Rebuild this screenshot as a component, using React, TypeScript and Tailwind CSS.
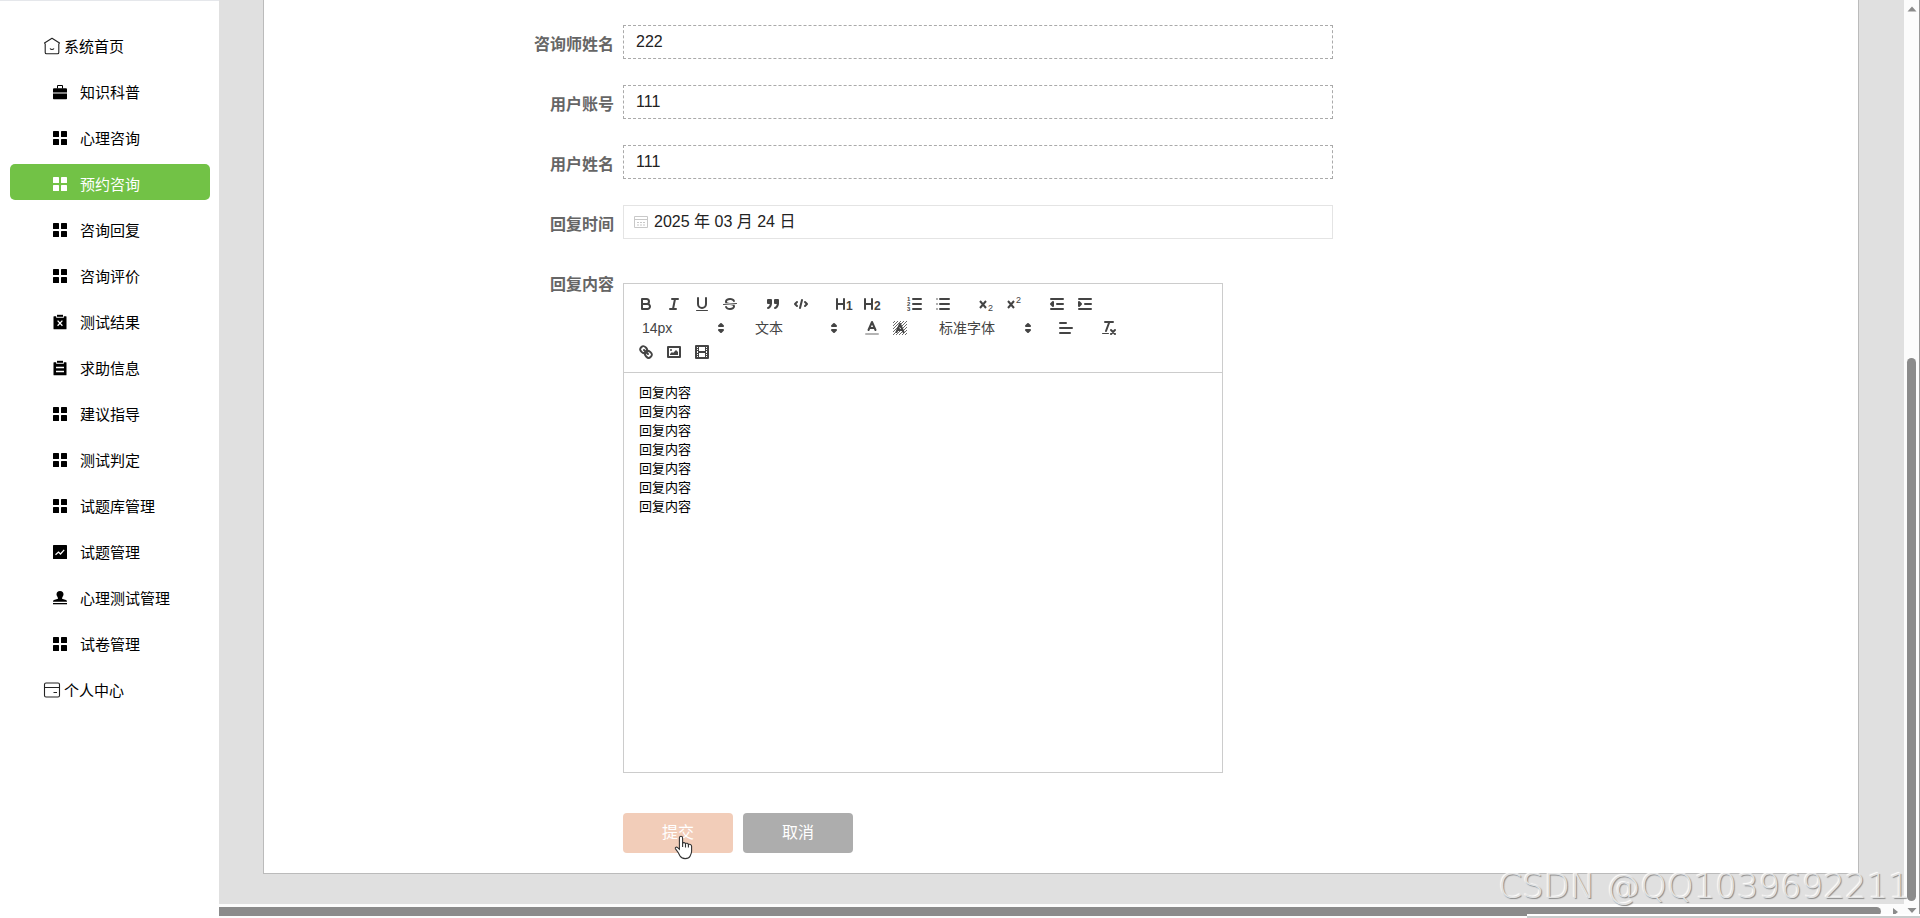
import { useId, useState } from "react";
import type { ReactNode } from "react";

type MenuIconName = "grid" | "case" | "clipX" | "clipLines" | "chart" | "stamp";

interface MenuItem {
  label: string;
  icon: MenuIconName;
}

const menuItems: MenuItem[] = [
  { label: "知识科普", icon: "case" },
  { label: "心理咨询", icon: "grid" },
  { label: "预约咨询", icon: "grid" },
  { label: "咨询回复", icon: "grid" },
  { label: "咨询评价", icon: "grid" },
  { label: "测试结果", icon: "clipX" },
  { label: "求助信息", icon: "clipLines" },
  { label: "建议指导", icon: "grid" },
  { label: "测试判定", icon: "grid" },
  { label: "试题库管理", icon: "grid" },
  { label: "试题管理", icon: "chart" },
  { label: "心理测试管理", icon: "stamp" },
  { label: "试卷管理", icon: "grid" },
];

const menuShapes: Record<MenuIconName, ReactNode> = {
  grid: (
    <>
      <rect x="1" y="1" width="6" height="6" rx="0.6" />
      <rect x="9" y="1" width="6" height="6" rx="0.6" />
      <rect x="1" y="9" width="6" height="6" rx="0.6" />
      <rect x="9" y="9" width="6" height="6" rx="0.6" />
    </>
  ),
  case: (
    <>
      <path d="M5.5 4.500V1.500h5v3" fill="none" stroke="currentColor" />
      <path d="M2 4.300h12a1 1 0 0 1 1 1v3.200H1V5.300a1 1 0 0 1 1-1Z" />
      <path d="M1 9.600h14v4.900a.7.7 0 0 1-.7.7H1.700a.7.7 0 0 1-.7-.7Z" />
    </>
  ),
  clipX: (
    <>
      <path d="M5 .8h6v2H5Z" />
      <path d="M2 2.200h2.200v1.500h7.600V2.200H14a.5.5 0 0 1 .5.5v12.100a.5.5 0 0 1-.5.5H2a.5.5 0 0 1-.5-.5V2.700a.5.5 0 0 1 .5-.5Z" />
      <path d="M5.600 6.600l4.800 5.200M10.400 6.600l-4.800 5.200" stroke="#fff" strokeWidth="1.300" />
    </>
  ),
  clipLines: (
    <>
      <path d="M5 .8h6v2H5Z" />
      <path d="M2 2.200h2.200v1.500h7.600V2.200H14a.5.5 0 0 1 .5.5v12.100a.5.5 0 0 1-.5.5H2a.5.5 0 0 1-.5-.5V2.700a.5.5 0 0 1 .5-.5Z" />
      <path d="M4 7.500h8M4 11.500h8" stroke="#fff" strokeWidth="1.300" />
    </>
  ),
  chart: (
    <>
      <rect x="1" y="1" width="14" height="14" rx="0.6" />
      <path d="M3.500 10.800 6.500 8l2 2 3.700-4.200" fill="none" stroke="#fff" strokeWidth="1.200" />
    </>
  ),
  stamp: (
    <>
      <path d="M8 1a3.500 3.500 0 0 1 3.500 3.500c0 1.500-1.500 2.500-1.500 4.300l4 1.200c.7.300 1 .8 1 1.800H1c0-1 .3-1.500 1-1.800l4-1.200c0-1.800-1.500-2.800-1.500-4.300A3.500 3.500 0 0 1 8 1Z" />
      <path d="M1 13h14v1.300H1Z" />
    </>
  ),
};

function MenuIcon({ name }: { name: MenuIconName }) {
  return (
    <svg viewBox="0 0 16 16" className="h-4 w-4 shrink-0" fill="currentColor" aria-hidden="true">
      {menuShapes[name]}
    </svg>
  );
}

function Sidebar() {
  const [active, setActive] = useState("预约咨询");
  const plain = "flex h-9 items-center gap-[3px] rounded pl-[33px] pt-1 text-[15px]";

  return (
    <aside className="w-[219px] shrink-0 border-t border-gray-200 bg-white pt-[25px] pr-[9px] pl-[10px] text-black">
      <nav className="flex flex-col gap-[10px]">
        <a href="#home" className={plain}>
          <svg viewBox="0 0 18 18" className="h-[18px] w-[18px]" fill="none" stroke="#222" strokeWidth="1.1" aria-hidden="true">
            <path d="M9 1.200 16.500 6 15.800 7v8.500a1.300 1.300 0 0 1-1.300 1.300h-11a1.300 1.300 0 0 1-1.300-1.300V7L1.500 6Z" strokeLinejoin="round" />
            <path d="M7 11.500c1 1.400 3 1.400 4 0" />
          </svg>
          <span className="pt-[2px]">系统首页</span>
        </a>
        {menuItems.map((item) => (
          <a
            key={item.label}
            href="#menu"
            onClick={() => setActive(item.label)}
            className={`flex h-9 items-center gap-3 rounded-[5px] pl-[42px] pt-1 text-[15px] ${
              active === item.label ? "bg-[#72c246] text-white" : ""
            }`}
          >
            <MenuIcon name={item.icon} />
            <span className="pt-[2px]">{item.label}</span>
          </a>
        ))}
        <a href="#profile" className={plain}>
          <svg viewBox="0 0 18 18" className="h-[18px] w-[18px]" fill="none" stroke="#222" strokeWidth="1.1" aria-hidden="true">
            <rect x="1.500" y="2" width="15" height="14" rx="1.500" />
            <path d="M1.500 6.500h15M10.500 11.500h3.500" />
          </svg>
          <span className="pt-[2px]">个人中心</span>
        </a>
      </nav>
    </aside>
  );
}

function ToolIcon({ children }: { children: ReactNode }) {
  return (
    <svg
      viewBox="0 0 18 18"
      className="h-[18px] w-[18px]"
      fill="none"
      stroke="#444"
      strokeWidth="2"
      strokeLinecap="round"
      strokeLinejoin="round"
      aria-hidden="true"
    >
      {children}
    </svg>
  );
}

function ToolButton({ label, children }: { label: string; children: ReactNode }) {
  return (
    <button type="button" aria-label={label} className="flex h-6 w-7 items-center justify-center">
      <ToolIcon>{children}</ToolIcon>
    </button>
  );
}

function Group({ children }: { children: ReactNode }) {
  return <div className="mr-[15px] flex">{children}</div>;
}

function Picker({ label, value, wide }: { label: string; value: string; wide?: boolean }) {
  return (
    <div className={`relative h-6 ${wide ? "w-[108px]" : "w-[98px]"}`}>
      <select
        aria-label={label}
        className="h-6 w-full appearance-none bg-transparent pl-[10px] text-sm leading-6 text-[#444] outline-none"
      >
        <option>{value}</option>
      </select>
      <span className="pointer-events-none absolute inset-y-0 right-0 flex items-center">
        <ToolIcon>
          <polygon points="7 11 9 13 11 11 7 11" />
          <polygon points="7 7 9 5 11 7 7 7" />
        </ToolIcon>
      </span>
    </div>
  );
}

function Numeral({ x, y, size, bold, children }: { x: number; y: number; size: number; bold?: boolean; children: string }) {
  return (
    <text x={x} y={y} fontSize={size} fill="#444" stroke="none" fontWeight={bold ? 700 : 400} fontFamily="Liberation Sans, sans-serif">
      {children}
    </text>
  );
}

function Toolbar() {
  const hatch = useId();

  return (
    <div className="flex flex-wrap border-b border-[#ccc] p-2">
      <Group>
        <ToolButton label="加粗">
          <path d="M5,4H9.5A2.5,2.5,0,0,1,12,6.5v0A2.5,2.5,0,0,1,9.5,9H5V4Z" />
          <path d="M5,9h5.5A2.5,2.5,0,0,1,13,11.5v0A2.5,2.5,0,0,1,10.5,14H5V9Z" />
        </ToolButton>
        <ToolButton label="斜体">
          <path d="M7 4H13M5 14H11M8 14L10 4" />
        </ToolButton>
        <ToolButton label="下划线">
          <path d="M5,3V9a4.012,4.012,0,0,0,4,4H9a4.012,4.012,0,0,0,4-4V3" />
          <rect x="3" y="15" width="12" height="1" rx="0.5" fill="#444" stroke="none" />
        </ToolButton>
        <ToolButton label="删除线">
          <path d="M15.5 8.5L2.5 9.5" strokeWidth="1" />
          <g fill="#444" stroke="none">
            <path d="M9.007,8C6.542,7.791,6,7.519,6,6.5,6,5.792,7.283,5,9,5c1.571,0,2.765.679,2.969,1.309a1,1,0,0,0,1.9-.617C13.356,4.106,11.354,3,9,3,6.2,3,4,4.538,4,6.5a3.2,3.2,0,0,0,.5,1.843Z" />
            <path d="M8.984,10C11.457,10.208,12,10.479,12,11.5c0,0.708-1.283,1.5-3,1.5-1.571,0-2.765-.679-2.969-1.309a1,1,0,1,0-1.9.617C4.644,13.894,6.646,15,9,15c2.8,0,5-1.538,5-3.5a3.2,3.2,0,0,0-.5-1.843Z" />
          </g>
        </ToolButton>
      </Group>
      <Group>
        <ToolButton label="引用">
          <g fill="#444">
            <rect x="4" y="5" width="3" height="3" />
            <rect x="11" y="5" width="3" height="3" />
            <path d="M7,8c0,4.031-3,5-3,5" fillRule="evenodd" />
            <path d="M14,8c0,4.031-3,5-3,5" fillRule="evenodd" />
          </g>
        </ToolButton>
        <ToolButton label="代码">
          <path d="M5 7L3 9L5 11M13 7L15 9L13 11" />
          <path d="M10 5L8 13" />
        </ToolButton>
      </Group>
      <Group>
        <ToolButton label="标题一">
          <path d="M2 4V14M9 4V14M2 9H9" />
          <Numeral x={11} y={15} size={12} bold>1</Numeral>
        </ToolButton>
        <ToolButton label="标题二">
          <path d="M2 4V14M9 4V14M2 9H9" />
          <Numeral x={11} y={15} size={12} bold>2</Numeral>
        </ToolButton>
      </Group>
      <Group>
        <ToolButton label="有序列表">
          <path d="M7 4H15M7 9H15M7 14H15" />
          <Numeral x={1} y={6} size={6} bold>1</Numeral>
          <Numeral x={1} y={11} size={6} bold>2</Numeral>
          <Numeral x={1} y={16} size={6} bold>3</Numeral>
        </ToolButton>
        <ToolButton label="无序列表">
          <path d="M6 4H15M6 9H15M6 14H15" />
          <path d="M3 4H3.01M3 9H3.01M3 14H3.01" strokeWidth="1.6" />
        </ToolButton>
      </Group>
      <Group>
        <ToolButton label="下标">
          <path d="M3 6L9 13M9 6L3 13" strokeLinecap="butt" />
          <Numeral x={11} y={16} size={9}>2</Numeral>
        </ToolButton>
        <ToolButton label="上标">
          <path d="M3 6L9 13M9 6L3 13" strokeLinecap="butt" />
          <Numeral x={11} y={8} size={9}>2</Numeral>
        </ToolButton>
      </Group>
      <Group>
        <ToolButton label="减少缩进">
          <path d="M3 14H15M3 4H15M9 9H15" />
          <polyline points="5 7 5 11 3 9 5 7" />
        </ToolButton>
        <ToolButton label="增加缩进">
          <path d="M3 14H15M3 4H15M9 9H15" />
          <polyline points="3 7 3 11 5 9 3 7" fill="#444" />
        </ToolButton>
      </Group>
      {/* keeps the pickers on the second toolbar line */}
      <div className="w-full" />
      <Group>
        <Picker label="字号" value="14px" />
      </Group>
      <Group>
        <Picker label="标题" value="文本" />
      </Group>
      <Group>
        <ToolButton label="文字颜色">
          <path d="M3 15H15" strokeOpacity="0.4" />
          <path d="M5.5 11L9 3L12.5 11M11.63 9H6.38" />
        </ToolButton>
        <ToolButton label="背景颜色">
          <defs>
            <pattern id={hatch} width="3" height="3" patternUnits="userSpaceOnUse">
              <path d="M-1 1L1 -1M0 3L3 0M2 4L4 2" strokeWidth="0.8" strokeLinecap="butt" />
            </pattern>
          </defs>
          <rect x="2" y="2" width="14" height="14" fill={`url(#${hatch})`} stroke="none" />
          <path d="M5.5 13L9 5L12.5 13M11.63 11H6.38" />
        </ToolButton>
      </Group>
      <Group>
        <Picker label="字体" value="标准字体" wide />
      </Group>
      <Group>
        <ToolButton label="对齐">
          <path d="M3 9H15M3 14H13M3 4H9" />
        </ToolButton>
      </Group>
      <Group>
        <ToolButton label="清除格式">
          <path d="M5 3H13M6 12L9.350 3M11 11L15 15M15 11L11 15" />
          <rect x="2" y="14" width="7" height="1" rx="0.5" fill="#444" stroke="none" />
        </ToolButton>
      </Group>
      <div className="w-full" />
      <Group>
        <ToolButton label="链接">
          <path d="M7 7L11 11" />
          <path d="M8.9,4.577a3.476,3.476,0,0,1,.36,4.679A3.476,3.476,0,0,1,4.577,8.9C3.185,7.5,2.035,6.4,4.217,4.217S7.5,3.185,8.9,4.577Z" />
          <path d="M13.423,9.1a3.476,3.476,0,0,0-4.679-.36,3.476,3.476,0,0,0,.36,4.679c1.392,1.392,2.5,2.542,4.679.36S14.815,10.5,13.423,9.1Z" />
        </ToolButton>
        <ToolButton label="图片">
          <rect x="3" y="4" width="12" height="10" />
          <g fill="#444" stroke="none">
            <circle cx="6" cy="7" r="1" />
            <polyline points="5 12 5 11 7 9 8 10 11 7 13 9 13 12 5 12" />
          </g>
        </ToolButton>
        <ToolButton label="视频">
          <rect x="3" y="3" width="12" height="12" />
          <path
            fill="#444"
            stroke="none"
            d="M5 3h1v12H5ZM12 3h1v12h-1ZM5 8h8v2H5ZM3 5h3v1H3ZM3 7h3v1H3ZM3 10h3v1H3ZM3 12h3v1H3ZM12 5h3v1h-3ZM12 7h3v1h-3ZM12 10h3v1h-3ZM12 12h3v1h-3Z"
          />
        </ToolButton>
      </Group>
    </div>
  );
}

function Row({ label, id, children }: { label: string; id: string; children: ReactNode }) {
  return (
    <div className="flex">
      <label
        htmlFor={id}
        className="h-[34px] w-[359px] shrink-0 pt-[3px] pr-[9px] text-right text-base leading-[34px] font-bold text-[#666]"
      >
        {label}
      </label>
      {children}
    </div>
  );
}

const readonlyFields = [
  { id: "counselor", label: "咨询师姓名", value: "222" },
  { id: "account", label: "用户账号", value: "111" },
  { id: "username", label: "用户姓名", value: "111" },
];

function ReplyForm() {
  return (
    <form
      className="flex flex-1 flex-col gap-[26px] border-x border-b border-[#bbb] bg-white pt-[25px]"
      onSubmit={(e) => e.preventDefault()}
    >
      {readonlyFields.map((f) => (
        <Row key={f.id} id={f.id} label={f.label}>
          <input
            id={f.id}
            readOnly
            defaultValue={f.value}
            className="h-[34px] w-full max-w-[710px] border border-dashed border-[#aaa] px-3 text-base text-[#222] outline-none"
          />
        </Row>
      ))}
      <Row id="reply-time" label="回复时间">
        <div className="flex h-[34px] w-full max-w-[710px] items-center gap-[6px] border border-[#e4e4e4] pl-[10px]">
          <svg viewBox="0 0 14 14" className="h-[14px] w-[14px] shrink-0" fill="none" stroke="#c8c8c8" aria-hidden="true">
            <path d="M.5 1.500h13v11H.5ZM.5 4.500h13M3 7.500h2M6 7.500h2M9 7.500h2M3 10h2M6 10h2M9 10h2" />
          </svg>
          <input
            id="reply-time"
            defaultValue="2025 年 03 月 24 日"
            className="h-8 flex-1 pb-1 text-base text-[#222] outline-none"
          />
        </div>
      </Row>
      <Row id="reply-content" label="回复内容">
        <div className="mt-[18px] w-[600px] border border-[#ccc]">
          <Toolbar />
          <textarea
            id="reply-content"
            rows={7}
            defaultValue={Array(7).fill("回复内容").join("\n")}
            className="block h-[399px] w-full resize-none px-[15px] py-[10px] text-[13px] leading-[19px] text-black outline-none"
          />
        </div>
      </Row>
      <div className="flex gap-[10px] pt-[14px] pb-5 pl-[359px]">
        <button type="submit" className="h-10 w-[110px] cursor-pointer rounded bg-[#f2cdb9] text-base text-white">
          提交
        </button>
        <button type="button" className="h-10 w-[110px] rounded bg-[#adadad] text-base text-white">
          取消
        </button>
      </div>
    </form>
  );
}

function VerticalScrollbar() {
  return (
    <div className="flex w-4 shrink-0 flex-col items-center border-r border-[#999] bg-[#fcfcfc] pt-[6px]" aria-hidden="true">
      <svg viewBox="0 0 10 6" className="h-[6px] w-[10px]" fill="#8b8b8b">
        <path d="M5 0.500 9.500 5.500H0.500Z" />
      </svg>
      <div className="grow-[346]" />
      <div className="w-[9px] grow-[543] rounded-full bg-[#8b8b8b]" />
      <svg viewBox="0 0 10 17" className="h-[17px] w-[10px]" fill="#8b8b8b">
        <path d="M0.500 7H9.500L5 12Z" />
      </svg>
    </div>
  );
}

function HorizontalScrollbar() {
  return (
    <div className="flex h-[14px] items-center gap-3 bg-[#fcfcfc] pt-[1px] pr-[6px]" aria-hidden="true">
      <div className="h-[9px] flex-1 rounded-r-full bg-[#8b8b8b]" />
      <svg viewBox="0 0 5 8" className="h-2 w-[5px]" fill="#8b8b8b">
        <path d="M0 0 5 4 0 8Z" />
      </svg>
    </div>
  );
}

function HandCursor() {
  return (
    <svg viewBox="0 0 20 25" className="pointer-events-none absolute top-[835px] left-[674px] h-[25px] w-5" aria-hidden="true">
      <path
        d="M7 1.200c1.100 0 1.600.8 1.600 1.700v5.300c.4-.9 2.600-.8 2.900.5.700-.8 2.700-.5 2.900.9 1-.6 3.200-.2 3.200 1.700v4.700c0 3-1.100 4-1.700 5.600-.6 1.300-2.300 2-4.800 2-3.100 0-4.400-1-5.200-2.800C4.900 18 3.300 16 1.500 13.800c-.7-1 .5-2.300 1.900-1.400l2 1.900V2.900c0-.9.500-1.700 1.600-1.700Z"
        fill="#fff"
        stroke="#333"
        strokeWidth="1.100"
      />
      <path d="M8.600 8v4M11.500 8.500v4M14.400 9.500v3" stroke="#333" strokeWidth="1.100" />
    </svg>
  );
}

export default function App() {
  return (
    <div className="relative flex min-h-screen overflow-hidden bg-white font-['Liberation_Sans','Noto_Sans_CJK_SC',sans-serif]">
      <Sidebar />
      <div className="flex min-w-0 flex-1 flex-col">
        <main className="flex flex-1 flex-col bg-[#e0e0e0] pr-[45px] pb-[30px] pl-[44px]">
          <ReplyForm />
        </main>
        <HorizontalScrollbar />
      </div>
      <VerticalScrollbar />
      <div className="absolute right-0 bottom-0 h-1 w-[393px] border-t-2 border-white bg-[#c8cccc]" aria-hidden="true" />
      <p className="pointer-events-none absolute right-[10px] bottom-3 text-[34px] leading-[40px] font-extralight whitespace-nowrap text-[#e2e2e2] font-['DejaVu_Sans_Light','DejaVu_Sans',sans-serif] [text-shadow:1px_1px_1px_#888,-1px_-1px_1px_#fff]">
        CSDN @QQ1039692211
      </p>
      <HandCursor />
    </div>
  );
}
